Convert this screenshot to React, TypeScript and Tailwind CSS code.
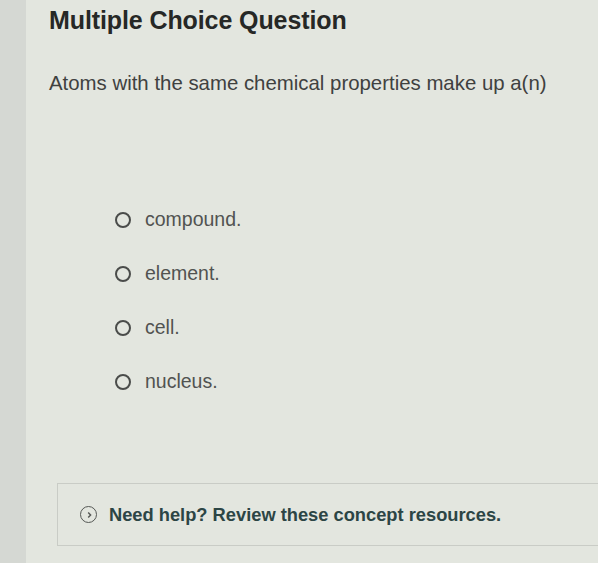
export default function App() {
  const options = ['compound.', 'element.', 'cell.', 'nucleus.']

  return (
    <div className="flex h-[563px] w-[598px] overflow-hidden bg-[#e3e6df] font-['Liberation_Sans',sans-serif]">
      <div className="w-[26px] shrink-0 bg-[#d5d8d3]" />
      <div className="flex flex-1 flex-col pl-[23px]">
        <h1 className="pt-[4px] text-[25px] font-bold leading-[32px] tracking-[-0.1px] text-[#262826]">
          Multiple Choice Question
        </h1>
        <p className="mt-[34px] text-[20.4px] leading-[26px] text-[#3f413f]">
          Atoms with the same chemical properties make up a(n)
        </p>

        <ul className="mt-[112px] flex flex-col gap-[30px] pl-[66px]">
          {options.map(o => (
            <li key={o} className="flex h-[24px] items-center gap-[14px]">
              <span className="h-[16px] w-[16px] rounded-full border-[2.5px] border-[#4a4c4a]" />
              <span className="text-[19.5px] text-[#515351]">{o}</span>
            </li>
          ))}
        </ul>

        <div className="mt-[89px] ml-[8px] flex h-[63px] items-center gap-[12px] border border-r-0 border-[#c9ccc6] pl-[22px]">
          <span className="flex h-[17px] w-[17px] items-center justify-center rounded-full border-[1.5px] border-[#555855]">
            <svg viewBox="0 0 10 10" className="h-[8px] w-[8px]" fill="none" stroke="#555855" strokeWidth="1.8">
              <path d="M4 2l3 3-3 3" />
            </svg>
          </span>
          <span className="text-[18.3px] font-bold text-[#2c4545]">
            Need help? Review these concept resources.
          </span>
        </div>
      </div>
    </div>
  )
}
